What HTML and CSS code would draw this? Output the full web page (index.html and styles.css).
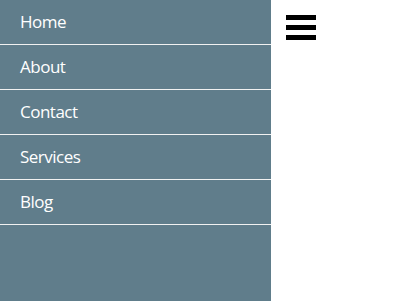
FILE: index.html
```html
<!DOCTYPE html>
<html>
<head>
<meta charset="utf-8">
<link rel="stylesheet" href="styles.css">
</head>
<body>
<div class="layout">
  <nav class="sidenav">
    <a href="#">Home</a>
    <a href="#">About</a>
    <a href="#">Contact</a>
    <a href="#">Services</a>
    <a href="#">Blog</a>
  </nav>
  <main class="main">
    <div class="hamburger">
      <span class="bar"></span>
      <span class="bar"></span>
      <span class="bar"></span>
    </div>
  </main>
</div>
</body>
</html>
```

FILE: styles.css
```css
html, body {
  margin: 0;
  padding: 0;
  height: 100%;
  background: #ffffff;
}
.layout {
  display: flex;
  height: 100%;
  font-family: "Open Sans", "Noto Sans", sans-serif;
}
.sidenav {
  width: 271px;
  flex: none;
  background: #607d8b;
  display: flex;
  flex-direction: column;
}
.sidenav a {
  display: block;
  height: 44px;
  line-height: 44px;
  padding-left: 20px;
  font-size: 17px;
  letter-spacing: -0.5px;
  color: #ffffff;
  text-decoration: none;
  border-bottom: 1px solid #f1f1f1;
}
.main {
  flex: 1;
  padding: 15px 0 0 15px;
}
.hamburger {
  display: flex;
  flex-direction: column;
  gap: 5px;
  width: 30px;
}
.bar {
  display: block;
  height: 5px;
  background: #000000;
}
```
